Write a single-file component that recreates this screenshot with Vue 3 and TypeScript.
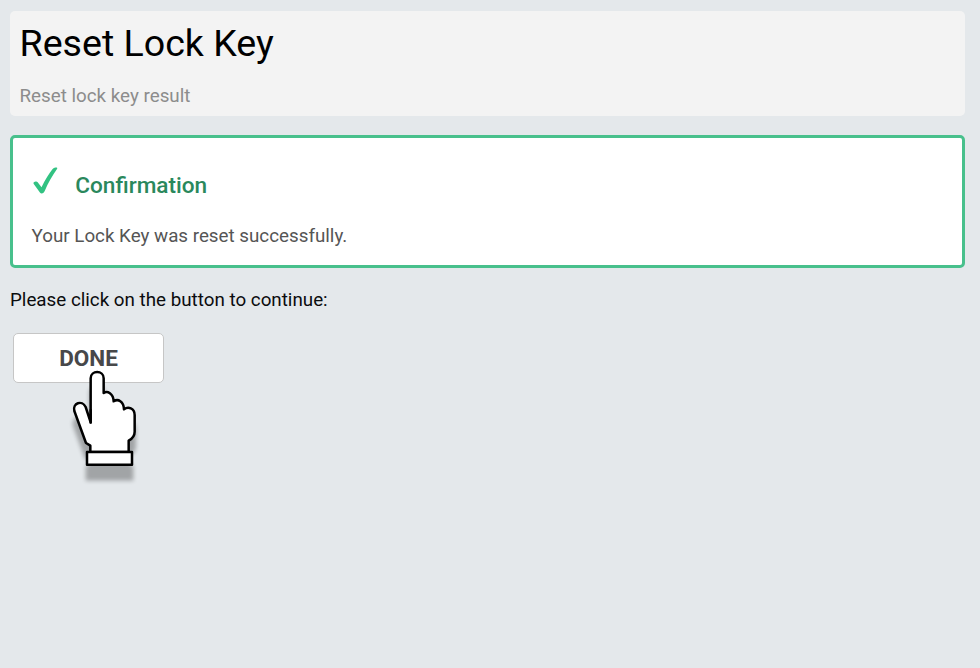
<script setup lang="ts">
const title: string = 'Reset Lock Key'
const subtitle: string = 'Reset lock key result'
const message: string = 'Your Lock Key was reset successfully.'
</script>

<template>
  <main class="page">
    <header class="heading">
      <h1>{{ title }}</h1>
      <p>{{ subtitle }}</p>
    </header>
    <section class="notice">
      <div class="notice-head">
        <svg class="check" viewBox="0 0 26 28" aria-hidden="true">
          <path d="M.6 16.8Q0 15.6 1.2 15L2.6 14.5Q3.8 14.1 4.7 15.2L8.5 20.3C12.3 12.6 15.9 6.4 19.6 2Q20.8.6 22.4.5L23.6.5Q24.9.8 24 2.1C19.1 8.9 15.3 15.8 11.6 24.3Q10.8 26.4 9 26.5Q7.7 26.6 6.9 25.4Z" />
        </svg>
        <h2>Confirmation</h2>
      </div>
      <p>{{ message }}</p>
    </section>
    <p class="prompt">Please click on the button to continue:</p>
    <div class="action">
      <button type="button">DONE</button>
      <svg class="pointer" viewBox="0 0 270 390" aria-hidden="true">
        <defs>
          <filter id="soft" x="-20%" y="-20%" width="140%" height="140%">
            <feGaussianBlur stdDeviation="6" />
          </filter>
          <g id="hand">
            <path d="M91 276V257L78 249L43 153C37 129 66 119 77 141L92 187V55C92 30 131 30 131 55V99C142 91 160 100 161 124C174 115 191 124 192 148C204 138 224 144 224 165V215Q224 232 206 242V276Z" />
            <rect x="81" y="276" width="135" height="38" />
          </g>
        </defs>
        <use href="#hand" class="shadow" y="44" filter="url(#soft)" />
        <use href="#hand" class="outline" />
        <path class="crease" d="M92 150V188" />
      </svg>
    </div>
  </main>
</template>

<style>
body { background: #e4e8eb; }
</style>

<style scoped>
.page {
  box-sizing: border-box;
  min-height: 668px;
  padding: 11px 15px 0 10px;
  font-family: Roboto, "Liberation Sans", sans-serif;
  font-size: 18.79px;
  color: #0b0c0e;
}
h1, h2, p { margin: 0; font-weight: 400; }
.heading {
  box-sizing: border-box;
  height: 105px;
  padding: 9px 9.5px 0;
  border-radius: 5px;
  background: #f3f3f3;
}
h1 { font-size: 37.6px; line-height: 46px; color: #000; }
.heading p { margin-top: 19px; line-height: 22px; color: #8c8c8c; }
.notice {
  box-sizing: border-box;
  height: 133px;
  margin-top: 19px;
  padding: 29px 19px 0 18.5px;
  border: 3px solid #48c08c;
  border-radius: 5px;
  background: #fff;
}
.notice-head { display: flex; align-items: flex-start; height: 34px; }
.check { width: 26px; height: 28px; margin-left: 1.5px; fill: #32c282; }
h2 {
  margin: 5px 0 0 16.3px;
  font-size: 22.6px;
  font-weight: 500;
  line-height: 28px;
  color: #2a885c;
}
.notice p { margin-top: 24px; line-height: 22px; color: #555; }
.prompt { margin-top: 21px; line-height: 22px; }
.action { position: relative; width: 151px; margin: 22px 0 0 3px; }
button {
  display: block;
  box-sizing: border-box;
  width: 151px;
  height: 50px;
  padding: 0;
  border: 1px solid #c6c6c6;
  border-radius: 5px;
  background: #fff;
  font: 700 22.5px/26px Roboto, "Liberation Sans", sans-serif;
  color: #47484a;
}
.pointer {
  position: absolute;
  left: 47px;
  top: 27px;
  width: 90px;
  height: 130px;
  pointer-events: none;
}
.outline { fill: #fff; stroke: #000; stroke-width: 7.5; stroke-linejoin: round; }
.shadow { fill: #000; stroke: #000; stroke-width: 8; opacity: .29; }
.crease { fill: none; stroke: #000; stroke-width: 7; stroke-linecap: round; }
</style>
